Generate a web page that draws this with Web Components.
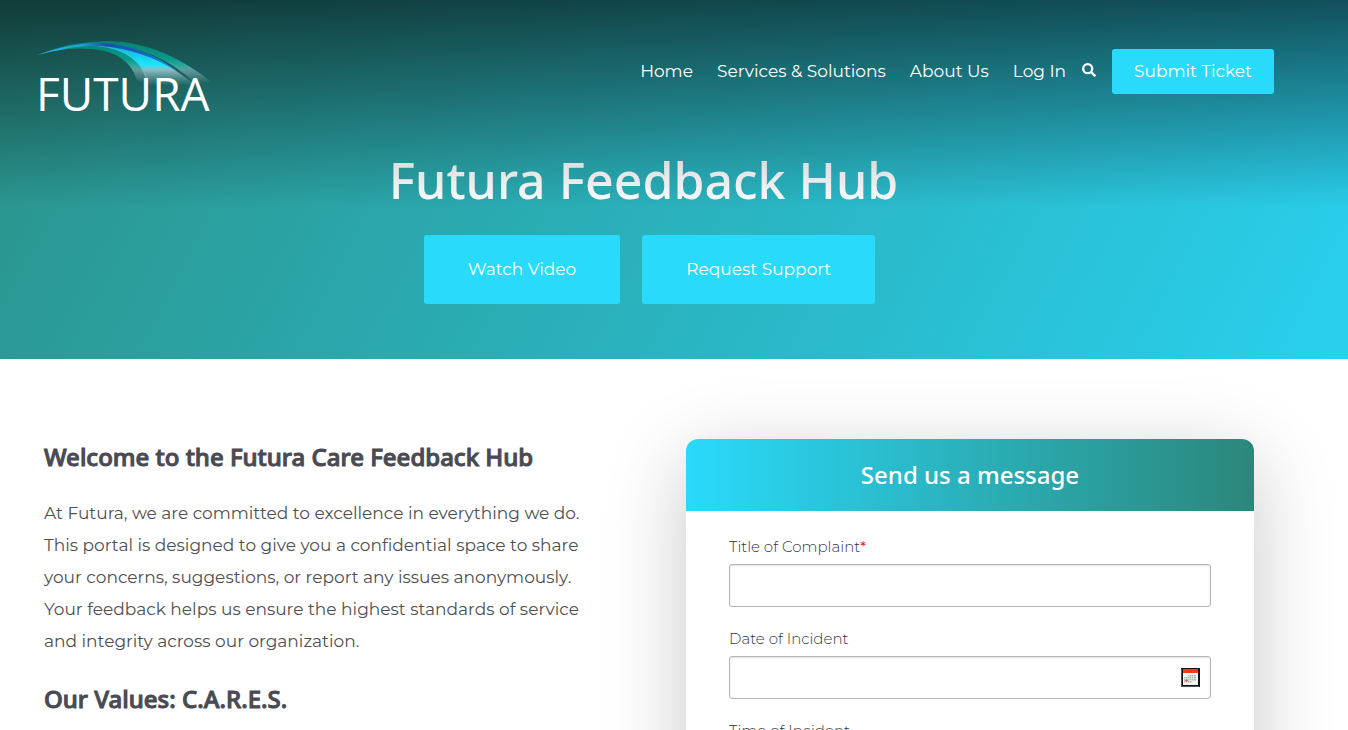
<!DOCTYPE html>
<html lang="en">
<head>
<meta charset="utf-8">
<meta name="viewport" content="width=device-width, initial-scale=1">
<title>Futura Feedback Hub</title>
<style>
  html { scrollbar-width: none; }
  body {
    margin: 0;
    background: #fff;
    --body-font: Montserrat, Inter, sans-serif;
    --head-font: "Noto Sans", sans-serif;
    --accent: #29dafb;
    --ink: #494a52;
    font-family: var(--body-font);
  }
</style>
</head>
<body>
<futura-page></futura-page>

<script>
const define = (name, html, setup) => {
  const template = document.createElement('template');
  template.innerHTML = html;
  customElements.define(name, class extends HTMLElement {
    constructor() {
      super();
      this.attachShadow({ mode: 'open' }).append(template.content.cloneNode(true));
    }
    connectedCallback() { if (setup) setup(this, this.shadowRoot); }
  });
};

define('futura-logo', `
<style>
  :host { display: block; }
  a { display: grid; width: 180px; color: #fff; text-decoration: none; }
  svg { grid-area: 1 / 1; display: block; width: 180px; height: 50px; }
  span { grid-area: 1 / 1; font: 400 46px/54px "Open Sans", sans-serif; padding-top: 26px; }
</style>
<a href="#home">
  <svg viewBox="0 0 180 50" aria-hidden="true">
    <defs>
      <linearGradient id="green" gradientUnits="userSpaceOnUse" x1="0" y1="0" x2="0" y2="48">
        <stop offset="0" stop-color="#048070"/><stop offset=".4" stop-color="#0a9a8a"/>
        <stop offset=".54" stop-color="#2fa8a0"/><stop offset=".64" stop-color="#8fbcbf" stop-opacity=".6"/>
        <stop offset=".9" stop-color="#9fc5c8" stop-opacity="0"/>
      </linearGradient>
      <linearGradient id="cyan" gradientUnits="userSpaceOnUse" x1="0" y1="0" x2="0" y2="48">
        <stop offset="0" stop-color="#1d9fd8"/><stop offset=".35" stop-color="#18d0ec"/>
        <stop offset=".52" stop-color="#1fe6fb"/><stop offset=".62" stop-color="#9fcdd6" stop-opacity=".85"/>
        <stop offset=".95" stop-color="#8fc0c6" stop-opacity="0"/>
      </linearGradient>
      <linearGradient id="blue" gradientUnits="userSpaceOnUse" x1="0" y1="0" x2="142" y2="0">
        <stop offset="0" stop-color="#25bce0"/><stop offset=".3" stop-color="#22a6d8"/>
        <stop offset=".5" stop-color="#1c4fa8"/><stop offset=".75" stop-color="#1c5fc0"/>
        <stop offset="1" stop-color="#149fe0"/>
      </linearGradient>
    </defs>
    <path d="M1 15 Q38 0 75 1 Q128 3 178 44 L160 44 Q120 6 68 5 Q34 5 1 15Z" fill="url(#green)"/>
    <path d="M1 15 Q34 4 65 4 Q118 8 162 48 L112 48 Q107 11 60 7 Q35 6 1 15Z" fill="url(#cyan)"/>
    <path d="M28 9 Q45 5 60 6 Q104 10 114 46 L101 40 Q92 12 56 9 Q42 8 28 9Z" fill="url(#green)"/>
    <path d="M1 15 Q38 2 66 3 Q110 6 142 32 Q106 9 64 6 Q33 5 1 15Z" fill="url(#blue)"/>
  </svg>
  <span>FUTURA</span>
</a>`);

define('cta-link', `
<style>
  :host { display: block; }
  a {
    display: flex; align-items: center; justify-content: center;
    box-sizing: border-box; height: 45px; padding: 0 22px 2px;
    border-radius: 3px; background: var(--accent); color: #fff;
    font-size: 17px; line-height: 24px; text-decoration: none; white-space: nowrap;
  }
  :host([size="large"]) a { height: 69px; padding: 0 44px 2px; }
</style>
<a href="#"><slot></slot></a>`, (host, root) => {
  root.querySelector('a').setAttribute('href', host.getAttribute('href') || '#');
});

define('site-header', `
<style>
  :host { display: block; position: relative; z-index: 2; }
  header { display: flex; justify-content: space-between; align-items: flex-start; padding: 40px 74px 0 36px; }
  nav { display: flex; align-items: center; margin-top: 9px; }
  .links { display: flex; gap: 24px; margin: 0; padding: 0 0 2px; list-style: none; }
  .links a { color: #fff; font-size: 17px; line-height: 24px; text-decoration: none; white-space: nowrap; }
  button { display: flex; margin: 0 16px 3px; padding: 0; border: 0; background: none; cursor: pointer; }
  svg { width: 14px; height: 14px; }
</style>
<header>
  <futura-logo></futura-logo>
  <nav aria-label="Main">
    <ul class="links">
      <li><a href="#home">Home</a></li>
      <li><a href="#services">Services &amp; Solutions</a></li>
      <li><a href="#about">About Us</a></li>
      <li><a href="#login">Log In</a></li>
    </ul>
    <button type="button" aria-label="Search">
      <svg viewBox="0 0 14 14" fill="none" stroke="#fff" stroke-width="2.3" aria-hidden="true">
        <circle cx="5.7" cy="5.7" r="4.5"/><path d="M9 9l4.3 4.3"/>
      </svg>
    </button>
    <cta-link href="#ticket">Submit Ticket</cta-link>
  </nav>
</header>`);

define('hero-banner', `
<style>
  :host {
    display: block; position: relative; padding-bottom: 55px;
    background: linear-gradient(118deg, #2b9289, #29d0ee);
  }
  :host::after {
    content: ""; position: absolute; z-index: 1; inset: 0 0 auto; height: 208px;
    background: linear-gradient(rgba(0,0,0,.6), transparent); pointer-events: none;
  }
  .body { display: flex; flex-direction: column; align-items: center; padding-right: 49px; }
  h1 { margin: 24px 12px 19px 0; color: #fff; font: 500 50px/72px var(--head-font); text-align: center; }
  .actions { display: flex; gap: 22px; }
</style>
<site-header></site-header>
<div class="body">
  <h1><slot></slot></h1>
  <div class="actions">
    <cta-link size="large" href="#video">Watch Video</cta-link>
    <cta-link size="large" href="#support">Request Support</cta-link>
  </div>
</div>`);

define('intro-text', `
<style>
  :host { display: block; color: var(--ink); }
  h2 { margin: 0 0 22px; font: 500 24px/36px var(--head-font); -webkit-text-stroke: 1px var(--ink); }
  p { margin: 0 0 24px; color: #505050; font-size: 17px; line-height: 32px; }
</style>
<h2>Welcome to the Futura Care Feedback Hub</h2>
<p>At Futura, we are committed to excellence in everything we do. This portal is designed to give you a confidential space to share your concerns, suggestions, or report any issues anonymously. Your feedback helps us ensure the highest standards of service and integrity across our organization.</p>
<h2>Our Values: C.A.R.E.S.</h2>`);

define('form-field', `
<style>
  :host { display: block; }
  label { display: block; margin-bottom: 5px; color: #33343a; font-size: 15px; line-height: 24px; font-weight: 300; }
  .star { color: #f00; font-weight: 400; }
  .box { position: relative; }
  input {
    display: block; box-sizing: border-box; width: 100%; height: 43px; padding: 0 12px;
    border: 1px solid #b5b5b5; border-radius: 3px; background: #fff;
    box-shadow: inset 0 1px 2px rgba(0,0,0,.12); font: 16px var(--body-font);
  }
  button { position: absolute; right: 11px; top: 12px; padding: 0; border: 0; background: none; line-height: 0; }
  [hidden] { display: none; }
</style>
<label for="control"><span class="name"></span><span class="star" hidden>*</span></label>
<div class="box">
  <input id="control" type="text">
  <button type="button" aria-label="Pick a date" hidden>
    <svg width="19" height="19" viewBox="0 0 19 19" shape-rendering="crispEdges" aria-hidden="true">
      <path fill="#111" d="M0 0h19v19H0z"/><path fill="#555" d="M0 1h1v17h17v1H0z"/>
      <path fill="#f4f4f4" d="M2 5h15v12H2z"/><path fill="#f83a15" d="M2 1h15v4H2z"/>
      <path fill="#b9b9b9" d="M7 7h8v6H7zM3 9h4v6H3zM7 13h4v2H7z"/>
      <path stroke="#f4f4f4" d="M8.500 7v8M10.500 7v8M12.500 7v6M6.500 9v6M4.500 9v6M3 8.500h12M3 10.500h12M3 12.500h12M3 14.500h8" stroke-width=".5"/>
      <path fill="#f0674e" d="M5 11h1v1h1v1H6v1H5v-1H4v-1h1z"/>
    </svg>
  </button>
</div>`, (host, root) => {
  root.querySelector('.name').textContent = host.getAttribute('label');
  root.querySelector('.star').hidden = !host.hasAttribute('required');
  root.querySelector('input').required = host.hasAttribute('required');
  root.querySelector('button').hidden = !host.hasAttribute('date');
});

define('message-card', `
<style>
  :host { display: block; border-radius: 12px; background: #fff; box-shadow: 0 20px 80px rgba(0,0,0,.22); }
  h2 {
    margin: 0; padding: 18px 20px; border-radius: 12px 12px 0 0; color: #fff;
    background: linear-gradient(90deg, #29dafb, #2b877a);
    font: 500 24px/36px var(--head-font); text-align: center;
  }
  form { display: grid; gap: 20px; padding: 24px 43px 43px; }
</style>
<h2>Send us a message</h2>
<form>
  <form-field label="Title of Complaint" required></form-field>
  <form-field label="Date of Incident" date></form-field>
  <form-field label="Time of Incident"></form-field>
</form>`);

define('futura-page', `
<style>
  :host { display: block; }
  main { display: grid; grid-template-columns: 548fr 568fr; gap: 94px; align-items: start; padding: 80px 94px 80px 44px; }
</style>
<hero-banner>Futura Feedback Hub</hero-banner>
<main>
  <intro-text></intro-text>
  <message-card></message-card>
</main>`);
</script>
</body>
</html>
